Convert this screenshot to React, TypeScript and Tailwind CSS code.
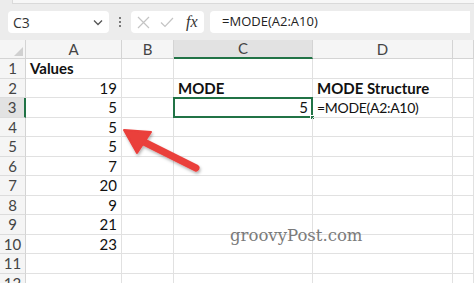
import React from "react";

const cols = [
  { key: "A", w: "w-[96px]" },
  { key: "B", w: "w-[52px]" },
  { key: "C", w: "w-[139px]" },
  { key: "D", w: "w-[140px]" },
  { key: "E", w: "flex-1" },
];

type Cell = { text?: string; bold?: boolean; right?: boolean; narrow?: boolean };
const data: Record<number, Record<string, Cell>> = {
  1: { A: { text: "Values", bold: true } },
  2: { A: { text: "19", right: true }, C: { text: "MODE", bold: true }, D: { text: "MODE Structure", bold: true } },
  3: { A: { text: "5", right: true }, C: { text: "5", right: true }, D: { text: "=MODE(A2:A10)", narrow: true } },
  4: { A: { text: "5", right: true } },
  5: { A: { text: "5", right: true } },
  6: { A: { text: "7", right: true } },
  7: { A: { text: "20", right: true } },
  8: { A: { text: "9", right: true } },
  9: { A: { text: "21", right: true } },
  10: { A: { text: "23", right: true } },
  11: {},
  12: {},
};

const cellFont = { fontFamily: "Lato, 'Open Sans', sans-serif" };

export default function App() {
  return (
    <div className="relative w-[474px] h-[283px] overflow-hidden bg-white" style={{ fontFamily: "'Open Sans', sans-serif" }}>
      {/* toolbar */}
      <div className="h-[40px] bg-[#ececec] flex flex-col">
        <div className="h-[4px] ml-[12px] bg-[#f7f7f7] border-b border-l border-[#dadada]" />
        <div className="flex items-center pt-[7px] h-[29px]">
          <div className="ml-[8px] w-[101px] h-[22px] bg-white rounded-[4px] flex items-center justify-between pl-[5px] pr-[6px]">
            <span className="text-[14px] text-[#333]">C3</span>
            <svg width="10" height="7" viewBox="0 0 10 7"><path d="M1 1.5 L5 5.5 L9 1.5" fill="none" stroke="#555" strokeWidth="1.3" /></svg>
          </div>
          <div className="w-[22px] flex flex-col items-center gap-[2px]">
            <div className="w-[2px] h-[2px] bg-[#555] rounded-full" />
            <div className="w-[2px] h-[2px] bg-[#555] rounded-full" />
            <div className="w-[2px] h-[2px] bg-[#555] rounded-full" />
          </div>
          <div className="w-[73px] h-[22px] bg-white rounded-[4px] flex items-center pl-[6px]">
            <svg width="13" height="13" viewBox="0 0 13 13"><path d="M1 1 L12 12 M12 1 L1 12" stroke="#c4c4c4" strokeWidth="1.2" /></svg>
            <svg className="ml-[10px]" width="14" height="11" viewBox="0 0 14 11"><path d="M1 5.5 L5 9.5 L13 1" fill="none" stroke="#c4c4c4" strokeWidth="1.2" /></svg>
            <span className="ml-[12px] text-[16px] italic text-[#333] leading-none" style={{ fontFamily: "'Liberation Serif', serif" }}>fx</span>
          </div>
          <div className="ml-[6px] w-[260px] h-[22px] bg-white rounded-l-[4px] flex items-center pl-[12px]">
            <span className="text-[13px] text-[#222]">=MODE(A2:A10)</span>
          </div>
        </div>
      </div>
      {/* header row */}
      <div className="flex h-[19px] bg-[#f5f5f5]" style={cellFont}>
        <div className="w-[26px] border-r border-b border-[#d4d4d4] flex items-end justify-end pr-[2px] pb-[2px]">
          <svg width="9" height="9" viewBox="0 0 9 9"><path d="M9 0 L9 9 L0 9 Z" fill="#d0d0d0" /></svg>
        </div>
        {cols.map((c) => (
          <div
            key={c.key}
            className={`${c.w} flex items-center justify-center text-[15px] text-[#444] border-r ${c.key === "C" ? "bg-[#e2e2e2] border-b-2 border-b-[#217346] border-r-[#d4d4d4]" : "border-b border-[#d4d4d4]"}`}
          >
            {c.key === "E" ? "" : c.key}
          </div>
        ))}
      </div>
      {/* rows */}
      {Object.keys(data).map((rk) => {
        const r = Number(rk);
        const row = data[r];
        return (
          <div key={r} className="flex h-[19.5px]" style={cellFont}>
            <div
              className={`w-[26px] shrink-0 flex items-center justify-center text-[15px] text-[#444] border-b border-[#dcdcdc] ${r === 3 ? "bg-[#e2e2e2] border-r-2 border-r-[#217346]" : "bg-[#f5f5f5] border-r border-r-[#d4d4d4]"}`}
            >
              {r}
            </div>
            {cols.map((c) => {
              const cell = row[c.key];
              const sel = r === 3 && c.key === "C";
              return (
                <div
                  key={c.key}
                  className={`${c.w} shrink-0 relative flex items-center px-[4px] text-[#111] border-r border-b border-[#e1e1e1] ${cell?.narrow ? "text-[14px] tracking-[-0.3px]" : "text-[15px]"} ${cell?.right ? "justify-end" : "justify-start"} ${cell?.bold ? "font-bold" : ""}`}
                >
                  {cell?.text}
                  {sel && (
                    <>
                      <div className="absolute -left-[1px] -top-[1px] -right-[1px] -bottom-[1px] border-2 border-[#217346]" />
                      <div className="absolute -right-[3px] -bottom-[3px] w-[5px] h-[5px] bg-[#217346] border border-white" />
                    </>
                  )}
                </div>
              );
            })}
          </div>
        );
      })}
      {/* watermark */}
      <div className="absolute left-[230px] top-[224px] text-[16.5px] text-[#7a7a7a]" style={{ fontFamily: "'DejaVu Serif', serif" }}>
        groovyPost.com
      </div>
      {/* arrow */}
      <svg className="absolute left-0 top-0 pointer-events-none" width="474" height="283" viewBox="0 0 474 283">
        <defs>
          <filter id="sh" x="-20%" y="-20%" width="140%" height="140%">
            <feDropShadow dx="1" dy="2" stdDeviation="1.5" floodColor="#000" floodOpacity="0.3" />
          </filter>
        </defs>
        <g filter="url(#sh)">
          <path d="M196 168 L136 138" stroke="#ea3f3b" strokeWidth="7" strokeLinecap="round" />
          <path d="M124 130 L151 132 L137 153 Z" fill="#ea3f3b" stroke="#ea3f3b" strokeWidth="2" strokeLinejoin="round" />
        </g>
      </svg>
    </div>
  );
}
